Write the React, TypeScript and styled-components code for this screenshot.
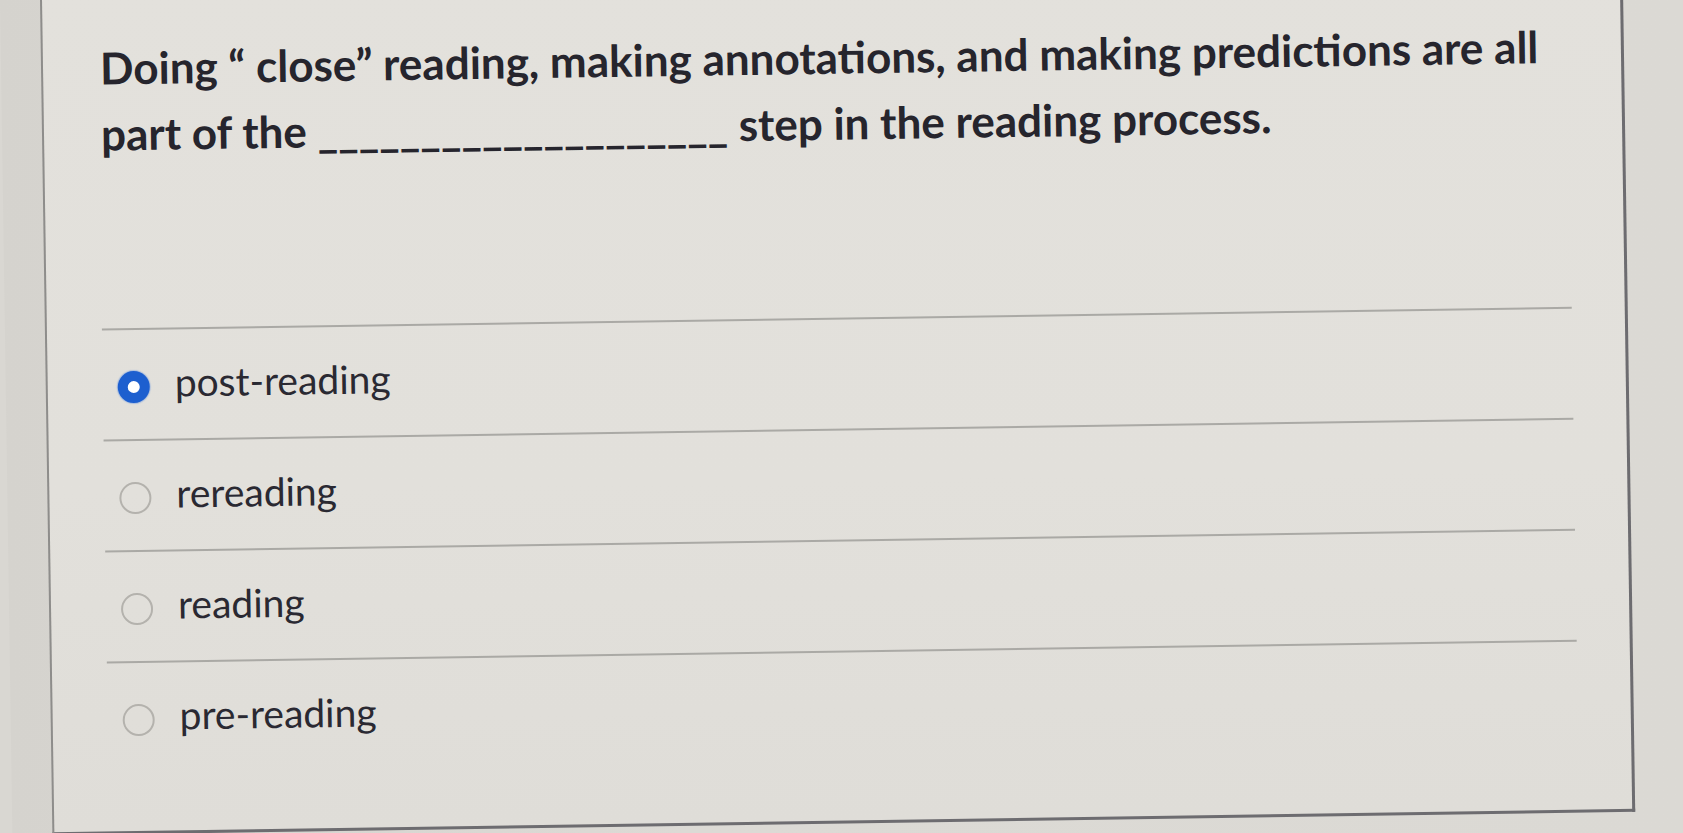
import React from "react";
import styled, { createGlobalStyle } from "styled-components";

const GlobalStyle = createGlobalStyle`
  html, body {
    margin: 0;
    padding: 0;
    width: 100%;
    height: 100%;
    overflow: hidden;
    background: #d9d7d2;
  }
  body {
    font-family: "Lato", "Noto Sans", "Liberation Sans", sans-serif;
    color: #2a2931;
  }
`;

/* The whole sheet sits slightly tilted on the screen. */
const Stage = styled.div`
  width: 1683px;
  height: 900px;
  transform-origin: 0 0;
  transform: rotate(-0.85deg);
  background: linear-gradient(90deg, #d5d3ce 0%, #dcdad5 40%, #dbd9d4 100%);
`;

const Card = styled.section`
  box-sizing: border-box;
  margin-left: 40px;
  width: 1583px;
  height: 856px;
  transform: translateY(-20px);
  border-left: 2px solid #8e8d8b;
  border-right: 3px solid #6d6c70;
  border-bottom: 3px solid #6d6c70;
  background: linear-gradient(180deg, #e3e1dc 0%, #e2e0db 60%, #dfddd8 100%);
  padding: 56px 53px 0 55px;
  display: flex;
  flex-direction: column;
`;

const Question = styled.p`
  margin: 0 0 0 2px;
  font-size: 44px;
  font-weight: 700;
  line-height: 66px;
  color: #26252d;
  white-space: nowrap;
`;

const Blank = styled.span`
  letter-spacing: 0;
`;

const Answers = styled.ul`
  list-style: none;
  margin: 162px 0 0 0;
  padding: 0;
  display: flex;
  flex-direction: column;
`;

const Answer = styled.li<{ $ruled: boolean }>`
  box-sizing: border-box;
  height: 111px;
  display: flex;
  align-items: center;
  gap: 25px;
  padding: 4px 0 0 15px;
  border-top: ${(p) => (p.$ruled ? "2px solid #aaa9a5" : "2px solid transparent")};
`;

const Radio = styled.span<{ $checked: boolean }>`
  box-sizing: border-box;
  flex: none;
  width: 32px;
  height: 32px;
  border-radius: 50%;
  ${(p) =>
    p.$checked
      ? `
    border: 10px solid #1d5fcf;
    background: #ffffff;
    box-shadow: 0 0 1px 1px rgba(40, 110, 230, 0.3);
  `
      : `
    border: 2.5px solid #b4b2ad;
    background: transparent;
  `}
`;

const AnswerText = styled.span`
  font-size: 39px;
  font-weight: 400;
  line-height: 1;
  color: #2a2932;
  margin-top: -8px;
`;

const options = [
  { label: "post-reading", checked: true },
  { label: "rereading", checked: false },
  { label: "reading", checked: false },
  { label: "pre-reading", checked: false },
];

export default function App() {
  return (
    <>
      <GlobalStyle />
      <Stage>
        <Card>
          <Question>
            Doing “ close” reading, making annotations, and making predictions are all
            <br />
            part of the <Blank>____________________</Blank> step in the reading process.
          </Question>
          <Answers>
            {options.map((o) => (
              <Answer key={o.label} $ruled>
                <Radio $checked={o.checked} />
                <AnswerText>{o.label}</AnswerText>
              </Answer>
            ))}
          </Answers>
        </Card>
      </Stage>
    </>
  );
}
